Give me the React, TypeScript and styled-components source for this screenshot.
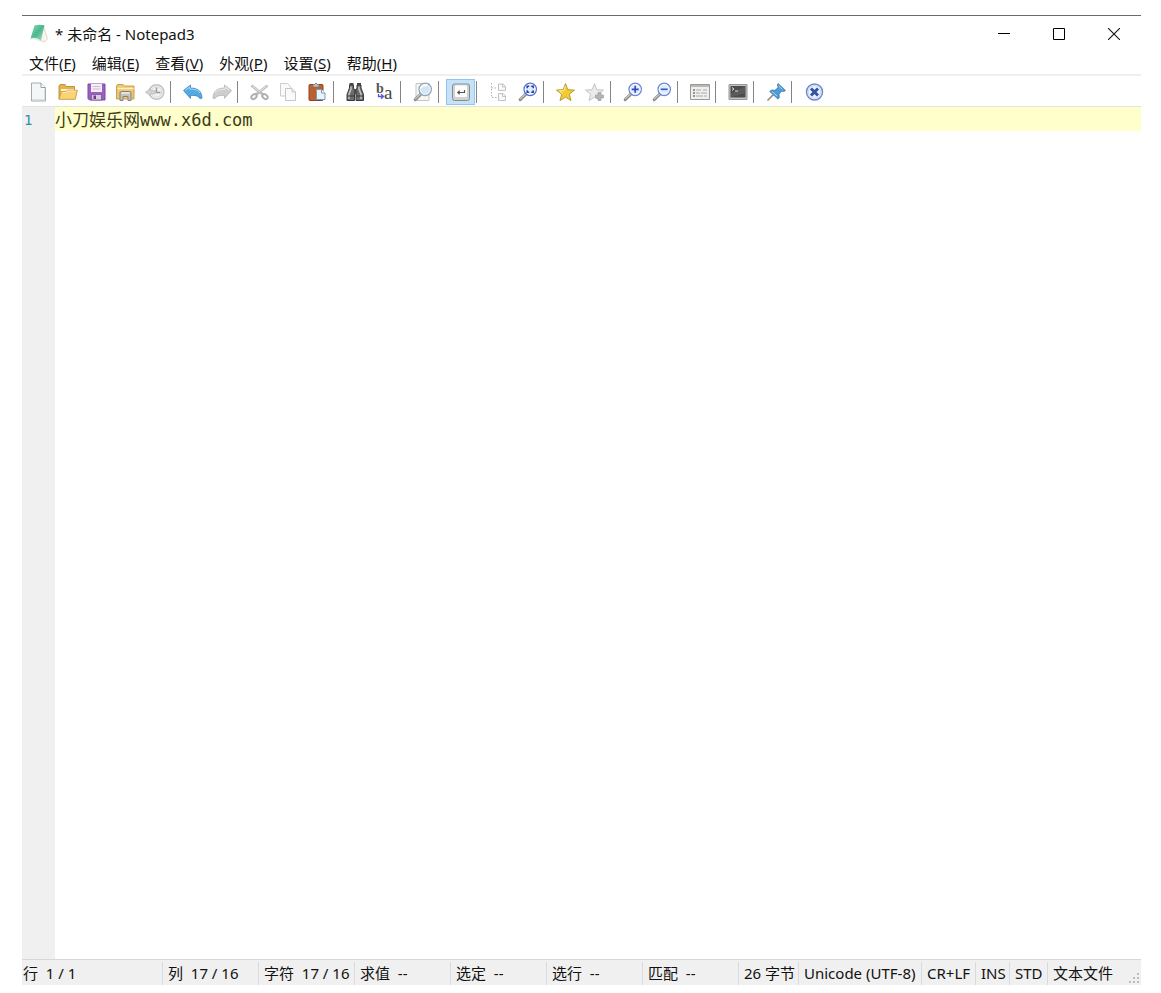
import React, { useState } from "react";
import styled, { createGlobalStyle } from "styled-components";

const ui = `"Noto Sans", "Noto Sans CJK SC", sans-serif`;
const mono = `"DejaVu Sans Mono", "Noto Sans CJK SC", monospace`;

const GlobalStyle = createGlobalStyle`
  * { box-sizing: border-box; }
  body { margin: 0; background: #fff; font-family: ${ui}; font-size: 15px; color: #111; }
  button { font: inherit; color: inherit; }
`;

const Desktop = styled.div`
  display: flex;
  min-height: 100vh;
  padding: 15px 20px 8px 22px;
`;

const AppWindow = styled.main`
  flex: 1;
  min-width: 0;
  display: flex;
  flex-direction: column;
  border-top: 1px solid #6a6a6a;
`;

const TitleBar = styled.header`
  display: flex;
  align-items: center;
  height: 36px;
  padding-left: 7px;
`;

const Title = styled.h1`
  flex: 1;
  margin: 0 0 0 6px;
  font-size: 15px;
  line-height: 20px;
  font-weight: 400;
`;

const WindowButton = styled.button`
  width: 55px;
  height: 36px;
  padding: 0;
  border: 0;
  background: transparent;
  display: grid;
  place-items: center;
  &:hover { background: #e5e5e5; }
`;

const MenuBar = styled.nav`
  display: flex;
  height: 22px;
`;

const MenuButton = styled.button`
  padding: 0 8px;
  border: 0;
  background: transparent;
  line-height: 22px;
  white-space: nowrap;
  &:first-child { padding-left: 7px; }
  &:hover { background: #e5f3ff; }
`;

const Toolbar = styled.div`
  display: flex;
  align-items: center;
  height: 33px;
  padding: 2px 0 0 2px;
  border-top: 2px solid #efefef;
  border-bottom: 1px solid #e4e4dc;
`;

const ToolButton = styled.button<{ $active?: boolean }>`
  width: 29px;
  height: 26px;
  padding: 0;
  display: grid;
  place-items: center;
  background: ${(p) => (p.$active ? "#c6e2f8" : "transparent")};
  border: 1px solid ${(p) => (p.$active ? "#92c6f0" : "transparent")};
`;

const Separator = styled.span`
  width: 9px;
  height: 22px;
  display: flex;
  &::before {
    content: "";
    width: 1px;
    margin-left: 1px;
    background: #858585;
  }
`;

const Editor = styled.section`
  flex: 1;
  display: flex;
`;

const Gutter = styled.div`
  width: 33px;
  padding-left: 2px;
  background: #f0f0f0;
  color: #2b91af;
  font: 14px/27px ${mono};
`;

const Source = styled.textarea`
  flex: 1;
  min-width: 0;
  padding: 1px 0 0;
  border: 0;
  outline: 0;
  resize: none;
  color: #3c3c16;
  background: linear-gradient(#ffffcc, #ffffcc) 0 0 / 100% 24px no-repeat #fff;
  font: 17px/24px ${mono};
`;

const StatusBar = styled.footer`
  display: grid;
  grid-template-columns: 140px repeat(6, 96px) 60px 123px 54px 34px 38px 1fr;
  align-items: stretch;
  height: 26px;
  padding-top: 2px;
  border-top: 1px solid #d7d7d7;
  background: #f0f0f0;
`;

const StatusCell = styled.span<{ $first?: boolean }>`
  padding-left: ${(p) => (p.$first ? "1px" : "5px")};
  border-left: ${(p) => (p.$first ? "0" : "1px solid #dadada")};
  line-height: 22px;
  white-space: pre;
`;

const LastCell = styled(StatusCell)`
  display: flex;
  justify-content: space-between;
`;

const Grip = styled.svg`
  align-self: flex-end;
`;

const Icon = ({ children, size = 20 }: { children: React.ReactNode; size?: number }) => (
  <svg width={size} height={size} viewBox="0 0 20 20" fill="none" aria-hidden="true">
    {children}
  </svg>
);

/* Magnifying glass with its handle at the lower left; children sit in the lens. */
const Lens = ({ rim, fill, children }: { rim: string; fill: string; children?: React.ReactNode }) => (
  <>
    <path d="M7.8 12.2 2.2 17.6" stroke="#8b8b83" strokeWidth="3" strokeLinecap="round" />
    <path d="M7.5 12 2.4 16.9" stroke="#c9c9c2" strokeWidth="1.2" strokeLinecap="round" />
    <circle cx="12.2" cy="7.3" r="6.2" fill={fill} stroke={rim} strokeWidth="1.3" />
    <circle cx="12.2" cy="7.3" r="5" stroke="#fff" strokeOpacity=".7" strokeWidth="1" />
    {children}
  </>
);

const icons: Record<string, React.ReactNode> = {
  "新建": (
    <>
      <path d="M2.5 1h9.500l4.500 4.500V19h-14Z" fill="#f3f7f8" stroke="#a3acae" />
      <path d="M3.500 17.500h12M15.500 7v11" stroke="#d4e1e5" />
      <path d="M12 1v4.500h4.500" fill="#fff" stroke="#8ea3a8" />
    </>
  ),
  "打开": (
    <>
      <path d="M1 17V4l1-1.500h5L8.500 4.500h8v4" fill="#e5b34e" stroke="#c1923b" />
      <path d="M3 7h13v4H3Z" fill="#fff4d6" />
      <path d="M1 17.300 3.500 9.500H8l1.300-1.300h10l-2 9.100Z" fill="#f8d477" stroke="#d0a044" />
      <path d="M4.500 10.400h3.900l1.400-1.300h8" stroke="#ffedb4" />
    </>
  ),
  "保存": (
    <>
      <path d="M1 2h17v16H2.500L1 16.500Z" fill="#9b60bd" stroke="#7d489e" />
      <path d="M4 2h11v8H4Z" fill="#f4eef8" />
      <path d="M5.500 4.500h8M5.500 7h8" stroke="#cdbbd9" />
      <path d="M4.500 12.500h10V18h-10Z" fill="#d7d0df" stroke="#754496" strokeWidth=".7" />
      <path d="M6.500 13.500H9V17H6.500Z" fill="#674080" />
    </>
  ),
  "浏览": (
    <>
      <path d="M.5 17V4l1-1.500H7L8.500 4H18v13Z" fill="#edc76f" stroke="#c9a052" />
      <path d="M1.500 6.500h16" stroke="#fff1c3" strokeWidth="1.500" />
      <path d="M4 18.500V11q0-1.500 1.500-1.500h8Q15 9.500 15 11v7.500h-3v-4H7v4Z" fill="#c4c4bd" stroke="#85827a" />
      <path d="M5.500 11h8" stroke="#fff" />
    </>
  ),
  "历史": (
    <>
      <circle cx="11.500" cy="10" r="7.300" fill="#f1f1f1" stroke="#c2c2c2" strokeWidth="1.500" />
      <circle cx="11.500" cy="10" r="5.300" stroke="#dadada" />
      <path d="M11.500 5.500v5M11.500 10.500h4M15 7v.1" stroke="#999" strokeWidth="1.400" />
      <path d="M.5 10.200 5.500 6.500v2.200h5v3h-5v2.200Z" fill="#d4d4d4" stroke="#b5b5b5" strokeWidth=".7" />
    </>
  ),
  "撤销": (
    <>
      <path d="M.500 8.500 7.500 3v3c7.500.100 11.300 3.200 11.500 10.200l-2.200.300c-1-2.300-3.600-3.300-9.300-3.100v3Z" fill="#55a9e2" stroke="#3a82bd" strokeWidth=".8" />
      <path d="m2.300 8.400 4.400-3.500v2.200c5.500 0 8.700 1.200 10.300 4" stroke="#a5d8f6" />
    </>
  ),
  "重做": (
    <>
      <path d="M19.500 8.500 12.500 3v3C5 6.100 1.200 9.200 1 16.200l2.200.300c1-2.300 3.600-3.300 9.300-3.100v3Z" fill="#cecece" stroke="#b4b4b4" strokeWidth=".8" />
      <path d="m17.700 8.400-4.400-3.500v2.200c-5.500 0-8.700 1.200-10.300 4" stroke="#ededed" />
    </>
  ),
  "剪切": (
    <>
      <path d="M1.500 3.500 13.500 13M17.500 3.500 5.500 13" stroke="#bcbcbc" strokeWidth="2.800" />
      <path d="M2.500 4 9.500 9.500M16.500 4l-7 5.500" stroke="#e8e8e8" strokeWidth="1" />
      <ellipse cx="4" cy="14.600" rx="3" ry="2" transform="rotate(-38 4 14.600)" stroke="#b0b0b0" strokeWidth="2" />
      <ellipse cx="15" cy="14.600" rx="3" ry="2" transform="rotate(38 15 14.600)" stroke="#b0b0b0" strokeWidth="2" />
    </>
  ),
  "复制": (
    <>
      <path d="M1.500 1.500h7L12 5v9H1.500Z" fill="#fafafa" stroke="#cdcdcd" />
      <path d="M6.500 6.500H13l3.500 3.500v8.500h-10Z" fill="#fafafa" stroke="#c6c6c6" />
      <path d="M13 6.500V10h3.500" stroke="#c6c6c6" />
    </>
  ),
  "粘贴": (
    <>
      <rect x="1" y="2.500" width="14" height="16" rx="1" fill="#b9622f" stroke="#8b4526" />
      <path d="M5 5V2.500h1.500q1.500-3 3 0H11V5Z" fill="#c2c2bb" stroke="#77746d" strokeWidth=".8" />
      <path d="M8.500 7.500h5L17 11v6.500H8.500Z" fill="#e9f3fa" stroke="#759cb6" />
      <path d="M13.500 7.500V11H17" fill="#fff" stroke="#759cb6" />
    </>
  ),
  "查找": (
    <>
      <path d="M3.500 3h4v3l1 2v10.500H1v-6L3.500 6ZM11 3h4v3l2.500 6.500v6H10V8l1-2Z" fill="#6c6c6c" stroke="#3a3a3a" />
      <path d="M8 7h2.500v5H8Z" fill="#4b4b4b" />
      <path d="M3.500 2h4M11 2h4" stroke="#444" strokeWidth="2" />
      <path d="M5 4.500V7l-2 5v5M13 4.500V7l2 5v5" stroke="#c4c4c4" strokeWidth="1.500" />
      <path d="M1.500 14h6.500M10.500 14H17" stroke="#333" />
    </>
  ),
  "替换": (
    <>
      <text x="1" y="11" fontFamily="Liberation Serif, serif" fontWeight="700" fontSize="14" fill="#555">b</text>
      <text x="9" y="17" fontFamily="Liberation Serif, serif" fontWeight="400" fontSize="19" fill="#444">a</text>
      <path d="M3.500 12v2.500h4M6 12.300l2.500 2.200L6 16.700" stroke="#5555d5" strokeWidth="1.300" />
    </>
  ),
  "查看": (
    <>
      <path d="M3 1.500h13v17H3Z" fill="#f6f6f4" stroke="#c6c6c6" />
      <Lens rim="#93a6b5" fill="#d3e6f4"><path d="M8 6q2-3.500 6-2.500" stroke="#fff" strokeWidth="1.400" /></Lens>
    </>
  ),
  "自动换行": (
    <>
      <rect x="1.500" y="2" width="17" height="16.500" rx="2" fill="#d0d2d2" stroke="#858c90" />
      <rect x="3.500" y="3" width="13" height="12.500" rx="1.500" fill="#fdfdfc" stroke="#c6cacb" strokeWidth=".7" />
      <path d="M13.500 8v2.500H7M8.700 8.700 6.800 10.500l1.900 1.800" stroke="#555" strokeWidth="1.200" />
    </>
  ),
  "折叠": (
    <>
      <path d="M2.500 1v14.500h6M2.500 6h6" stroke="#b5b5b5" strokeDasharray="1.500 1.500" />
      <path d="M9.500 2H14l2.500 2.500v4h-7ZM9.500 11.500H14l2.500 2.500v4.500h-7Z" fill="#f9f9f9" stroke="#c2c2c2" />
      <path d="M13.500 2v3h3M13.500 11.500v3h3" stroke="#c2c2c2" />
    </>
  ),
  "选区缩放": (
    <Lens rim="#5672c4" fill="#e0edff">
      <path d="M9.200 6.300v-2h2M13.200 4.300h2v2M15.200 8.300v2h-2M11.200 10.300h-2v-2" stroke="#243fba" strokeWidth="1.500" />
    </Lens>
  ),
  "收藏": (
    <>
      <path d="m9.500 1.500 2.300 6.200 6.700.400-5.200 4.200 1.700 6.300-5.500-3.500L4 18.600l1.700-6.300L.5 8.100l6.700-.4Z" fill="#f3cb2f" stroke="#b99d37" />
      <path d="M9.500 4 7.900 8.600l-4.400.3L6.800 11.600" stroke="#fff092" />
    </>
  ),
  "添加收藏": (
    <>
      <path d="m9.500 1.500 2.300 6.200 6.700.400-5.200 4.200 1.700 6.300-5.500-3.500L4 18.600l1.700-6.300L.5 8.100l6.700-.4Z" fill="#ebebeb" stroke="#c4c4c4" />
      <path d="M13 10.500h3V13h2.500v3H16v2.500h-3V16h-2.500v-3H13Z" fill="#b4b4b4" stroke="#999" strokeWidth=".6" />
    </>
  ),
  "放大": <Lens rim="#6c87cf" fill="#e0edff"><path d="M8.700 7.300h7M12.200 3.800v7" stroke="#314abd" strokeWidth="1.700" /></Lens>,
  "缩小": <Lens rim="#6c87cf" fill="#e0edff"><path d="M8.700 7.300h7" stroke="#405abd" strokeWidth="1.700" /></Lens>,
  "方案": (
    <>
      <path d="M.5 2.500h19v15H.5Z" fill="#efefed" stroke="#999" />
      <path d="M1 4h18" stroke="#b9b9b7" strokeWidth="2" />
      <path d="M3 8h2M3 11h2M3 14h2" stroke="#777" strokeWidth="1.300" />
      <path d="M6 8h5M13 8h4M6 11h4M11 11h6M6 14h7M14 14h3" stroke="#aaa" />
    </>
  ),
  "终端": (
    <>
      <path d="M1 2.500h18v15H1Z" fill="#c4c4c4" stroke="#969696" />
      <path d="M2.500 4h15v11.500h-15Z" fill="#4b4b4b" />
      <path d="M17.500 4v7l-15 4.500V12Z" fill="#6c6c6c" opacity=".5" />
      <path d="m4 5.500 2 1.500-2 1.500M7 9h3" stroke="#ddd" />
    </>
  ),
  "置顶": (
    <>
      <path d="m7.500 12.500-6 6" stroke="#8f8f8f" strokeWidth="1.700" />
      <path d="m12 1.500 7.500 7-1.700 1-2-.4-2.800 3 .3 3.600-1.500 1.300-8-7.500L5.300 8l3.700.3 3.100-2.800-.7-2.800Z" fill="#4e9cd6" stroke="#3b79b3" strokeWidth=".8" />
      <path d="m12.500 4 4 3.500M6 9.500l5 4.500" stroke="#a4d6f5" />
    </>
  ),
  "退出": (
    <>
      <circle cx="10.500" cy="10" r="8" fill="#eef4ff" stroke="#6e8acf" strokeWidth="1.500" />
      <circle cx="10.500" cy="10" r="6.300" stroke="#c9d7f3" />
      <path d="m7 6.500 7 7M14 6.500l-7 7" stroke="#3153a6" strokeWidth="3" />
    </>
  ),
};

const toolGroups = [
  ["新建", "打开", "保存", "浏览", "历史"],
  ["撤销", "重做"],
  ["剪切", "复制", "粘贴"],
  ["查找", "替换"],
  ["查看"],
  ["自动换行"],
  ["折叠", "选区缩放"],
  ["收藏", "添加收藏"],
  ["放大", "缩小"],
  ["方案"],
  ["终端"],
  ["置顶"],
  ["退出"],
];

const menus = [
  ["文件", "F"],
  ["编辑", "E"],
  ["查看", "V"],
  ["外观", "P"],
  ["设置", "S"],
  ["帮助", "H"],
];

const statusCells = [
  "行  1 / 1",
  "列  17 / 16",
  "字符  17 / 16",
  "求值  --",
  "选定  --",
  "选行  --",
  "匹配  --",
  "26 字节",
  "Unicode (UTF-8)",
  "CR+LF",
  "INS",
  "STD",
];

export default function App() {
  const [text, setText] = useState("小刀娱乐网www.x6d.com");
  const [wrap, setWrap] = useState(true);

  return (
    <>
      <GlobalStyle />
      <Desktop lang="zh-CN">
        <AppWindow>
          <TitleBar>
            <Icon>
              <defs>
                <linearGradient id="sheet" x1="0" y1="0" x2="1" y2="1">
                  <stop offset="0" stopColor="#8fd9be" />
                  <stop offset=".5" stopColor="#4cb78d" />
                  <stop offset="1" stopColor="#a9e0cb" />
                </linearGradient>
              </defs>
              <path d="m14.500 2 4 13-3.500 3-4-2Z" fill="#f9f5ec" stroke="#d3c8b4" strokeWidth=".7" />
              <path d="M5.500 1.500Q10 0 15.500 1.200L12 16.500Q6 12.500 1.500 14.500Z" fill="url(#sheet)" />
              <path d="M1.500 14.500Q6 12.500 12 16.500l.2 1.300Q6 14 1.500 15.800Z" fill="#dcebe5" />
            </Icon>
            <Title>* 未命名 - Notepad3</Title>
            <WindowButton aria-label="最小化">
              <svg width="12" height="12" viewBox="0 0 12 12"><path d="M0 5.500h12" stroke="#000" /></svg>
            </WindowButton>
            <WindowButton aria-label="最大化">
              <svg width="12" height="12" viewBox="0 0 12 12"><path d="M.5.5h11v11H.5Z" fill="none" stroke="#000" /></svg>
            </WindowButton>
            <WindowButton aria-label="关闭">
              <svg width="12" height="12" viewBox="0 0 12 12"><path d="m0 0 12 12M12 0 0 12" stroke="#111" strokeWidth="1.100" /></svg>
            </WindowButton>
          </TitleBar>
          <MenuBar>
            {menus.map(([name, key]) => (
              <MenuButton key={key}>
                {name}(<u>{key}</u>)
              </MenuButton>
            ))}
          </MenuBar>
          <Toolbar role="toolbar">
            {toolGroups.map((group, index) => (
              <React.Fragment key={group[0]}>
                {index > 0 && <Separator />}
                {group.map((name) => {
                  const isWrap = name === "自动换行";
                  return (
                    <ToolButton
                      key={name}
                      aria-label={name}
                      $active={isWrap && wrap}
                      aria-pressed={isWrap ? wrap : undefined}
                      onClick={isWrap ? () => setWrap(!wrap) : undefined}
                    >
                      <Icon>{icons[name]}</Icon>
                    </ToolButton>
                  );
                })}
              </React.Fragment>
            ))}
          </Toolbar>
          <Editor>
            <Gutter>1</Gutter>
            <Source
              aria-label="文本"
              spellCheck={false}
              wrap={wrap ? "soft" : "off"}
              value={text}
              onChange={(e) => setText(e.target.value)}
            />
          </Editor>
          <StatusBar>
            {statusCells.map((cell, index) => (
              <StatusCell key={cell} $first={index === 0}>{cell}</StatusCell>
            ))}
            <LastCell>
              文本文件
              <Grip width="12" height="12" viewBox="0 0 12 12" fill="#bcbcbc" aria-hidden="true">
                <path d="M8 0h2v2H8ZM4 4h2v2H4ZM8 4h2v2H8ZM0 8h2v2H0ZM4 8h2v2H4ZM8 8h2v2H8Z" />
              </Grip>
            </LastCell>
          </StatusBar>
        </AppWindow>
      </Desktop>
    </>
  );
}
